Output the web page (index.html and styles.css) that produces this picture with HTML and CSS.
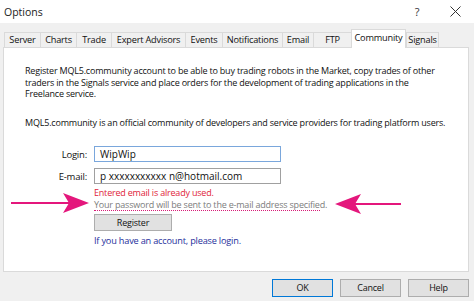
FILE: index.html
```html
<!DOCTYPE html>
<html>
<head>
<meta charset="utf-8">
<link rel="stylesheet" href="styles.css">
</head>
<body>
<div class="window">
  <div class="titlebar">
    <span class="title">Options</span>
    <span class="tb-help">?</span>
    <span class="tb-close"><svg width="11" height="11" viewBox="0 0 11 11"><path d="M0.5 0.5 L10.5 10.5 M10.5 0.5 L0.5 10.5" stroke="#333" stroke-width="1" fill="none"/></svg></span>
  </div>
  <div class="body">
    <div class="tabs">
      <div class="tab t-server">Server</div>
      <div class="tab t-charts">Charts</div>
      <div class="tab t-trade">Trade</div>
      <div class="tab t-ea">Expert Advisors</div>
      <div class="tab t-events">Events</div>
      <div class="tab t-notif">Notifications</div>
      <div class="tab t-email">Email</div>
      <div class="tab t-ftp">FTP</div>
      <div class="tab active t-comm">Community</div>
      <div class="tab t-signals">Signals</div>
    </div>
    <div class="panel">
      <p class="para">Register MQL5.community account to be able to buy trading robots in the Market, copy trades of other traders in the Signals service and place orders for the development of trading applications in the Freelance service.</p>
      <p class="para para2">MQL5.community is an official community of developers and service providers for trading platform users.</p>
      <div class="form">
        <label class="lbl">Login:</label>
        <div class="input focused">WipWip</div>
        <label class="lbl">E-mail:</label>
        <div class="input">p xxxxxxxxxxx n@hotmail.com</div>
        <div></div>
        <div class="msgs">
          <div class="err">Entered email is already used.</div>
          <div class="info">Your password will be sent to the e-mail address specified.</div>
          <div class="reg-btn">Register</div>
          <div class="link">If you have an account, please login.</div>
        </div>
      </div>
      <svg class="arrow arrow-left" width="80" height="22" viewBox="0 0 80 22"><path d="M0 11 H58" stroke="#e4177c" stroke-width="2.2"/><path d="M52 1 L78 11 L52 21 L58 11 Z" fill="#e4177c"/></svg>
      <svg class="arrow arrow-right" width="66" height="22" viewBox="0 0 66 22"><path d="M20 11 H66" stroke="#e4177c" stroke-width="2.2"/><path d="M26 1 L0 11 L26 21 L20 11 Z" fill="#e4177c"/></svg>
    </div>
    <div class="footer">
      <div class="btn default">OK</div>
      <div class="btn">Cancel</div>
      <div class="btn">Help</div>
    </div>
  </div>
</div>
</body>
</html>
```
FILE: styles.css
```css
* { box-sizing: border-box; }
html, body { margin: 0; padding: 0; }
body {
  width: 474px; height: 301px; overflow: hidden;
  font-family: "Open Sans", "Noto Sans", sans-serif;
  font-size: 9px; letter-spacing: -0.2px; color: #111;
  background: #f0f0f0;
}
.window { width: 474px; height: 301px; display: flex; flex-direction: column; }
.titlebar {
  height: 23px; background: #fff; display: flex; align-items: center;
  padding: 0 0 0 4px; font-size: 10.5px; letter-spacing: 0; color: #222;
}
.title { flex: 1; }
.tb-help { width: 12px; margin-right: 27px; font-size: 11px; color: #333; text-align: center; }
.tb-close { width: 11px; height: 11px; margin-right: 13px; display: flex; }
.body { flex: 1; padding: 6px 5px 0 3px; display: flex; flex-direction: column; }
.tabs { display: flex; align-items: flex-end; height: 18px; padding-left: 1px; position: relative; z-index: 1; }
.tab {
  height: 15px; line-height: 14px; text-align: center;
  border: 1px solid #dadada; border-bottom: none; border-right: none;
  background: #f0f0f0; color: #111; white-space: nowrap; font-size: 9.2px;
}
.tab.active { height: 19px; background: #fff; border-right: 1px solid #dadada; margin-bottom: -1px; line-height: 15px; }
.t-server { width: 36px; }
.t-charts { width: 36px; }
.t-trade { width: 35px; }
.t-ea { width: 74px; }
.t-events { width: 37px; }
.t-notif { width: 60px; }
.t-email { width: 31px; }
.t-ftp { width: 38px; }
.t-comm { width: 55px; }
.t-signals { width: 33px; border-right: 1px solid #dadada; }
.panel {
  position: relative; height: 225px; background: #fff;
  border: 1px solid #dadada; padding: 17px 20px 0 21px;
}
.para { margin: 0; line-height: 11.5px; }
.para2 { margin-top: 17px; }
.form {
  display: grid; grid-template-columns: 62px 187px; column-gap: 7px; row-gap: 6px;
  margin-top: 18px; align-items: center;
}
.lbl { text-align: right; font-size: 9.5px; }
.input {
  height: 16px; border: 1px solid #a0a0a0; padding: 0 0 0 5px; line-height: 14px;
  font-size: 10px; letter-spacing: 0; background: #fff;
}
.input.focused { border-color: #7aa7dc; }
.msgs { margin-top: -3px; }
.err { color: #e0243a; font-size: 9px; line-height: 11.5px; }
.info {
  color: #7d7d7d; font-size: 9px; line-height: 11.5px; width: 226px;
  border-bottom: 1.5px dotted #d81b78; padding-bottom: 0; white-space: nowrap;
}
.reg-btn {
  width: 78px; height: 17px; margin-top: 3px; background: #e1e1e1; border: 1px solid #adadad;
  text-align: center; line-height: 15px;
}
.link { color: #26309c; font-size: 9.2px; margin-top: 3px; line-height: 13px; }
.arrow { position: absolute; }
.arrow-left { left: 7px; top: 144px; }
.arrow-right { left: 331px; top: 145px; }
.footer { display: flex; justify-content: flex-end; gap: 7px; padding: 7px 0 0 0; }
.btn {
  width: 61px; height: 18px; background: #e1e1e1; border: 1px solid #adadad;
  text-align: center; line-height: 16px;
}
.btn.default { border-color: #0078d7; }
```
